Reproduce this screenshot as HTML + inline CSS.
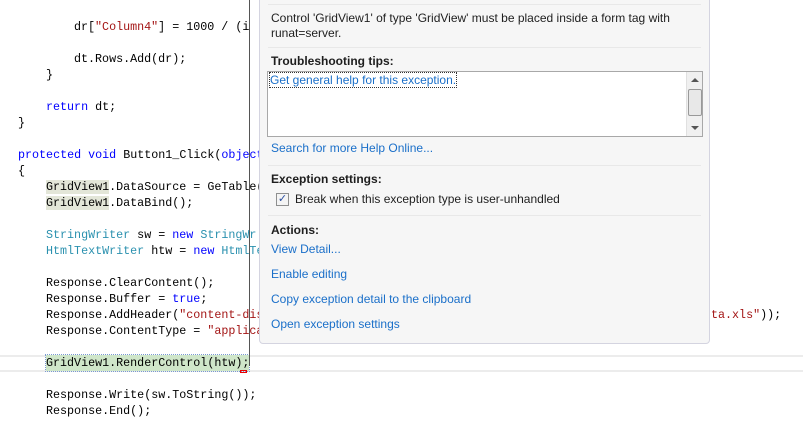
<!DOCTYPE html>
<html><head><meta charset="utf-8"><style>
*{margin:0;padding:0;box-sizing:border-box}
body{width:803px;height:421px;overflow:hidden;background:#fff;position:relative;font-family:"Liberation Mono",monospace}
.l{position:absolute;font-size:11.7px;white-space:pre;line-height:16px;color:#000;letter-spacing:0}
.k{color:#0000ff}.s{color:#a31515}.t{color:#2b91af}
.hl{background:#e3e6d8}
.pop{position:absolute;left:259px;top:-6px;width:451px;height:350px;background:#f6f6f6;border:1px solid #d4d4e0;border-radius:4px;font-family:"Liberation Sans",sans-serif;font-size:12px;color:#1e1e1e}
.p{position:absolute;white-space:nowrap}
.a{color:#1a6fc9}
.b{font-weight:bold}
.sep{position:absolute;left:8px;right:8px;height:1px;background:#e8e8e8}
</style></head><body>
<div style="position:absolute;left:0;top:355px;width:803px;height:2px;background:#ececec"></div>
<div style="position:absolute;left:0;top:370px;width:803px;height:2px;background:#ececec"></div>
<div class="l" style="left:74px;top:19px">dr[<span class="s">"Column4"</span>] = 1000 / (i </div>
<div class="l" style="left:74px;top:51px">dt.Rows.Add(dr);</div>
<div class="l" style="left:46px;top:67px">}</div>
<div class="l" style="left:46px;top:99px"><span class="k">return</span> dt;</div>
<div class="l" style="left:18px;top:115px">}</div>
<div class="l" style="left:18px;top:147px"><span class="k">protected</span> <span class="k">void</span> Button1_Click(<span class="k">object</span></div>
<div class="l" style="left:18px;top:163px">{</div>
<div class="l" style="left:46px;top:179px"><span class="hl">GridView1</span>.DataSource = GeTable(</div>
<div class="l" style="left:46px;top:195px"><span class="hl">GridView1</span>.DataBind();</div>
<div class="l" style="left:46px;top:227px"><span class="t">StringWriter</span> sw = <span class="k">new</span> <span class="t">StringWr</span></div>
<div class="l" style="left:46px;top:243px"><span class="t">HtmlTextWriter</span> htw = <span class="k">new</span> <span class="t">HtmlTe</span></div>
<div class="l" style="left:46px;top:275px">Response.ClearContent();</div>
<div class="l" style="left:46px;top:291px">Response.Buffer = <span class="k">true</span>;</div>
<div class="l" style="left:46px;top:307px">Response.AddHeader(<span class="s">"content-dis</span></div>
<div class="l" style="left:46px;top:323px">Response.ContentType = <span class="s">"applica</span></div>
<div class="l" style="left:711px;top:307px"><span class="s">ta.xls"</span>));</div>
<div class="l" style="left:46px;top:355px;background:#cfe6c9;outline:1px dotted #7a9ad0">GridView1.RenderControl(htw);</div>
<div style="position:absolute;left:240px;top:370px;width:7px;height:3px;border:1px solid #e00"></div>
<div class="l" style="left:46px;top:387px">Response.Write(sw.ToString());</div>
<div class="l" style="left:46px;top:403px">Response.End();</div>
<div style="position:absolute;left:249px;top:0;width:1px;height:366px;background:#555"></div>
<div class="pop">
<div class="sep" style="top:9px"></div>
<div class="p" style="left:11px;top:16px">Control 'GridView1' of type 'GridView' must be placed inside a form tag with</div>
<div class="p" style="left:11px;top:31px">runat=server.</div>
<div class="sep" style="top:52px"></div>
<div class="p b" style="left:11px;top:59px">Troubleshooting tips:</div>
<div style="position:absolute;left:7px;top:76px;width:436px;height:66px;background:#fff;border:1px solid #a8a8a8">
<span class="p a" style="left:2px;top:1px;outline:1px dotted #333">Get general help for this exception.</span>
<div style="position:absolute;right:0;top:0;width:16px;height:64px;background:#f0f0f0;border-left:1px solid #e0e0e0">
<div style="position:absolute;left:4px;top:6px;border:4px solid transparent;border-bottom:4px solid #555;border-top:0"></div>
<div style="position:absolute;left:1px;top:17px;width:14px;height:27px;background:#e8e8e8;border:1px solid #999;border-radius:2px"></div>
<div style="position:absolute;left:4px;top:54px;border:4px solid transparent;border-top:4px solid #555;border-bottom:0"></div>
</div></div>
<div class="p a" style="left:11px;top:146px">Search for more Help Online...</div>
<div class="sep" style="top:170px"></div>
<div class="p b" style="left:11px;top:177px">Exception settings:</div>
<div style="position:absolute;left:16px;top:198px;width:13px;height:13px;border:1px solid #8e8f8f;background:#f4f4f4;color:#2a4ea0;font-size:11px;line-height:11px;text-align:center">✓</div>
<div class="p" style="left:35px;top:197px">Break when this exception type is user-unhandled</div>
<div class="sep" style="top:220px"></div>
<div class="p b" style="left:11px;top:228px">Actions:</div>
<div class="p a" style="left:11px;top:247px">View Detail...</div>
<div class="p a" style="left:11px;top:272px">Enable editing</div>
<div class="p a" style="left:11px;top:297px">Copy exception detail to the clipboard</div>
<div class="p a" style="left:11px;top:322px">Open exception settings</div>
</div>
</body></html>
